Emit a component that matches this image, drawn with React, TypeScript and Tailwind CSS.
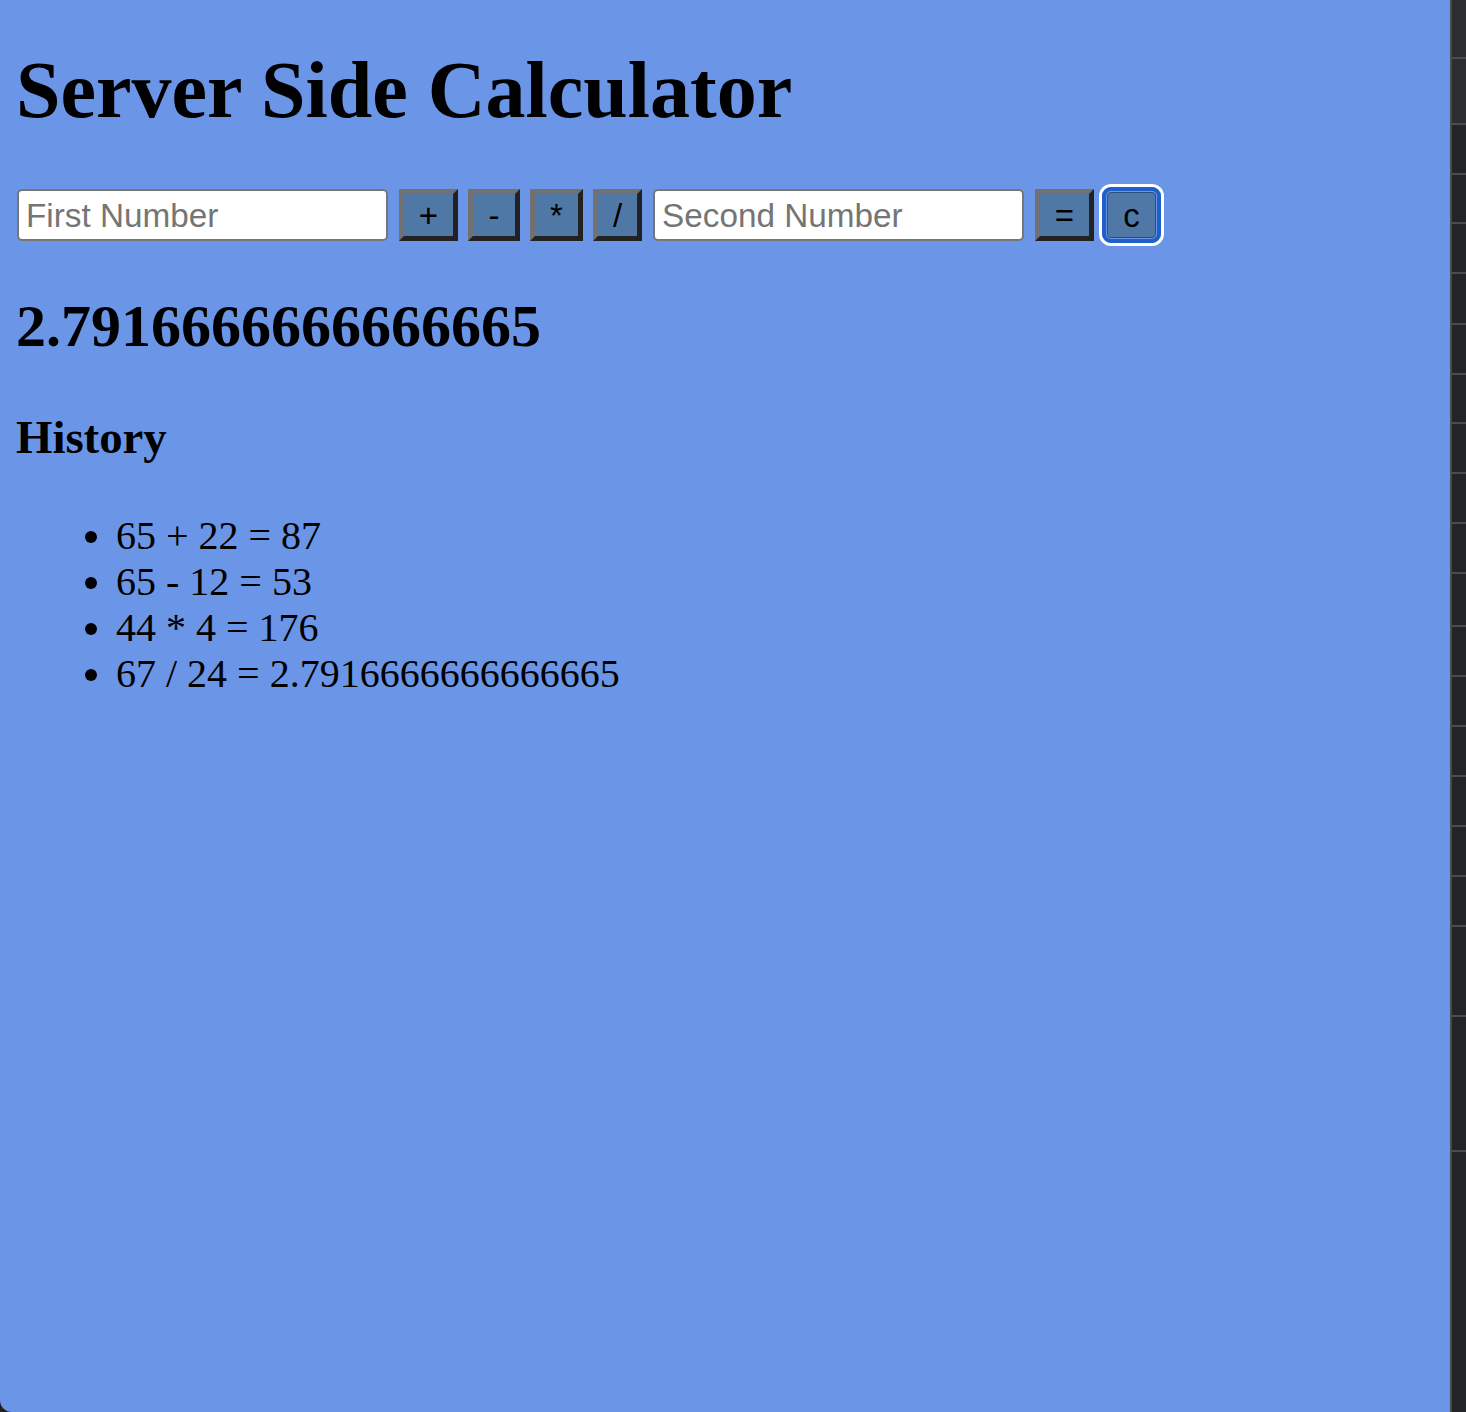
import React from "react";

const HISTORY = [
  "65 + 22 = 87",
  "65 - 12 = 53",
  "44 * 4 = 176",
  "67 / 24 = 2.7916666666666665",
];

// y positions of the separator ticks in the dark side strip
const STRIP_LINES = [57, 123, 173, 222, 272, 323, 373, 422, 472, 522, 572, 625, 675, 725, 775, 825, 875, 925, 1015, 1150];

function OpButton({ label, width, className }: { label: string; width: string; className?: string }) {
  return (
    <button
      className={`${width} ${className || ""} h-[52px] shrink-0 bg-[#4f78a7] border-[5px] border-t-[#717171] border-l-[#717171] border-b-[#222222] border-r-[#222222] text-black text-[33px] leading-none flex items-center justify-center`}
      style={{ fontFamily: '"Liberation Sans", Arial, sans-serif' }}
    >
      {label}
    </button>
  );
}

function NumberInput({ placeholder, className }: { placeholder: string; className?: string }) {
  return (
    <input
      placeholder={placeholder}
      className={`${className || ""} w-[371px] h-[52px] shrink-0 bg-white border-[2.5px] border-[#767676] rounded-[5px] pl-[7px] pr-[5px] pt-[2px] text-[33.3px] text-black placeholder:text-[#757575] outline-none`}
      style={{ fontFamily: '"Liberation Sans", Arial, sans-serif' }}
    />
  );
}

function SideStrip() {
  const segs: { h: number; dark: boolean }[] = [];
  let prev = 0;
  STRIP_LINES.forEach((y, i) => {
    segs.push({ h: y - prev, dark: i > 1 });
    prev = y;
  });
  segs.push({ h: 1412 - prev, dark: true });
  return (
    <div className="w-[14px] h-full flex flex-col bg-[#232428]">
      {segs.map((s, i) => (
        <div
          key={i}
          className={`shrink-0 ${i > 0 ? "border-t-2 border-[#4b4c50]" : ""} ${s.dark ? "bg-[#232428]" : "bg-[#2c2d31]"}`}
          style={{ height: s.h }}
        />
      ))}
    </div>
  );
}

export default function App() {
  return (
    <div className="w-[1466px] h-[1412px] flex bg-[#1f2023] overflow-hidden">
      <div
        className="flex-1 h-full bg-[#6b96e7] rounded-bl-[12px] pl-[16px] text-black"
        style={{ fontFamily: '"Liberation Serif", "Times New Roman", serif' }}
      >
        <h1 className="mt-[44px] text-[80px] leading-[92px] font-bold">Server Side Calculator</h1>

        <div className="mt-[48px] h-[62px] flex items-center pl-[1px]">
          <NumberInput placeholder="First Number" />
          <OpButton label="+" width="w-[59px]" className="ml-[11px]" />
          <OpButton label="-" width="w-[52px]" className="ml-[10px]" />
          <OpButton label="*" width="w-[53px]" className="ml-[10px]" />
          <OpButton label="/" width="w-[49px]" className="ml-[10px]" />
          <NumberInput placeholder="Second Number" className="ml-[11px]" />
          <OpButton label="=" width="w-[59px]" className="ml-[11px]" />
          {/* focused clear button with focus ring */}
          <div className="ml-[5px] w-[65px] h-[62px] shrink-0 rounded-[12px] border-[3px] border-white">
            <div className="w-full h-full rounded-[9px] border-[4px] border-[#1f5fc9] p-[1px]">
              <button
                className="w-full h-full bg-[#4f78a7] rounded-[4px] border border-[#2c4d7d] text-black text-[33px] leading-none flex items-center justify-center"
                style={{ fontFamily: '"Liberation Sans", Arial, sans-serif' }}
              >
                c
              </button>
            </div>
          </div>
        </div>

        <h2 className="mt-[46px] text-[60px] leading-[69px] font-bold">2.7916666666666665</h2>

        <h3 className="mt-[49px] text-[46.8px] leading-[54px] font-bold">History</h3>

        <ul className="mt-[49px] pl-[100px] list-disc text-[40px] leading-[46px]">
          {HISTORY.map((h) => (
            <li key={h}>{h}</li>
          ))}
        </ul>
      </div>
      <div className="w-[2px] h-full bg-[#4a4a4c]" />
      <SideStrip />
    </div>
  );
}
